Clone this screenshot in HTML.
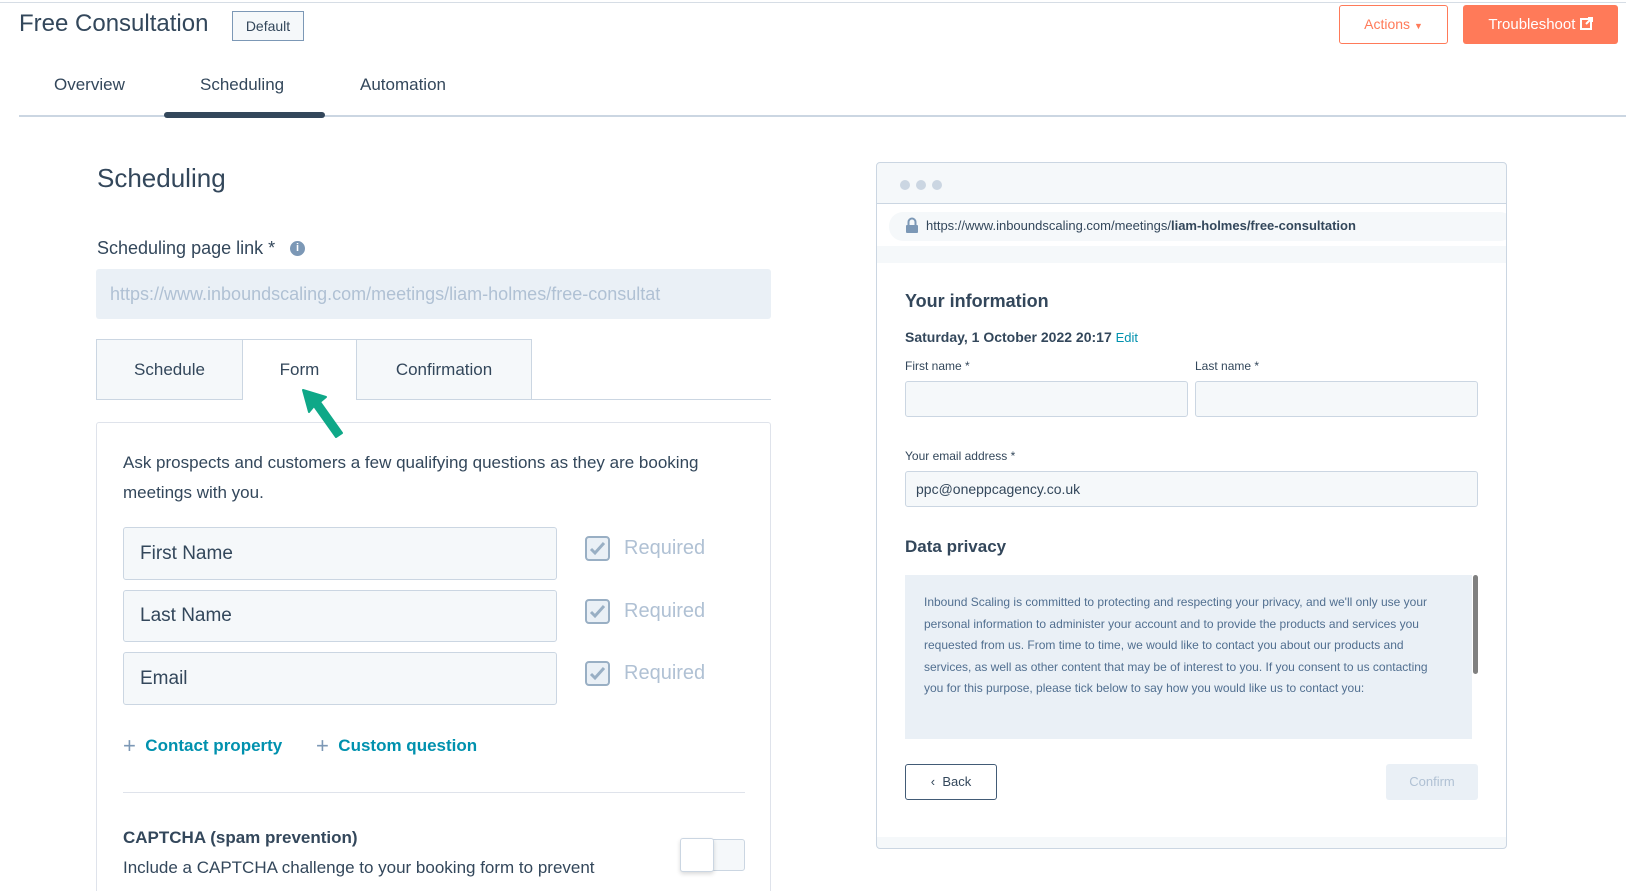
<!DOCTYPE html>
<html style="width:1626px;height:891px;overflow:hidden"><head><meta charset="utf-8"><style>
*{box-sizing:border-box;margin:0;padding:0}
body{width:1626px;height:891px;overflow:hidden;background:#fff;font-family:"Liberation Sans",sans-serif;color:#33475b;position:relative}
.a{position:absolute;white-space:nowrap}
</style></head><body>
<div class="a" style="left:0;top:2px;width:1626px;height:1px;background:#d6dde5"></div>
<div class="a" style="left:19px;top:10px;font-size:24px;color:#33475b">Free Consultation</div>
<div class="a" style="left:232px;top:11px;width:72px;height:30px;border:1px solid #7c98b6;background:#f5f8fa;font-size:14px;line-height:28px;text-align:center">Default</div>
<div class="a" style="left:1339px;top:5px;width:109px;height:39px;border:1px solid #ff7a59;border-radius:3px;color:#ff7a59;font-size:14px;line-height:37px;text-align:center">Actions <span style="font-size:9px">&#9660;</span></div>
<div class="a" style="left:1463px;top:5px;width:155px;height:39px;background:#ff7a59;border-radius:3px;color:#fff;font-size:15px;line-height:39px;text-align:center">Troubleshoot <svg width="13" height="13" viewBox="0 0 13 13" style="vertical-align:-1px"><rect x="1" y="2" width="10" height="10" fill="none" stroke="#fff" stroke-width="2"/><path d="M6 7L12 1M8 0.5h4.5V5" stroke="#fff" stroke-width="2" fill="none"/></svg></div>

<div class="a" style="left:54px;top:75px;font-size:17px">Overview</div>
<div class="a" style="left:200px;top:75px;font-size:17px">Scheduling</div>
<div class="a" style="left:360px;top:75px;font-size:17px">Automation</div>
<div class="a" style="left:19px;top:115px;width:1607px;height:2px;background:#cbd6e2"></div>
<div class="a" style="left:164px;top:112px;width:161px;height:6px;background:#33475b;border-radius:3px"></div>

<div class="a" style="left:97px;top:163px;font-size:26px">Scheduling</div>
<div class="a" style="left:97px;top:238px;font-size:18px">Scheduling page link *</div>
<div class="a" style="left:290px;top:241px;width:15px;height:15px;border-radius:50%;background:#7c98b6;color:#fff;font-size:11px;font-weight:bold;text-align:center;line-height:15px">i</div>
<div class="a" style="left:96px;top:269px;width:675px;height:50px;background:#eaf0f6;border-radius:3px;color:#b0c1d4;font-size:18px;line-height:50px;padding-left:14px;overflow:hidden">https://www.inboundscaling.com/meetings/liam-holmes/free-consultat</div>

<div class="a" style="left:96px;top:399px;width:675px;height:1px;background:#cbd6e2"></div>
<div class="a" style="left:96px;top:339px;width:147px;height:61px;background:#f5f8fa;border:1px solid #cbd6e2;font-size:17px;line-height:60px;text-align:center">Schedule</div>
<div class="a" style="left:243px;top:339px;width:113px;height:62px;background:#fff;border-top:1px solid #cbd6e2;font-size:17px;line-height:60px;text-align:center">Form</div>
<div class="a" style="left:356px;top:339px;width:176px;height:61px;background:#f5f8fa;border:1px solid #cbd6e2;font-size:17px;line-height:60px;text-align:center">Confirmation</div>

<div class="a" style="left:96px;top:422px;width:675px;height:469px;border:1px solid #dfe3eb;border-bottom:none;border-radius:3px 3px 0 0"></div>
<svg class="a" style="left:296px;top:385px" width="54" height="60" viewBox="0 0 54 60"><path d="M7 5L30 12L24 17L46 48L40 52L18 21L13 27Z" fill="#0fa888" stroke="#0fa888" stroke-width="2" stroke-linejoin="round"/></svg>

<div class="a" style="left:123px;top:448px;font-size:17px;line-height:30px;white-space:normal;width:630px;color:#33475b">Ask prospects and customers a few qualifying questions as they are booking meetings with you.</div>

<div class="a" style="left:123px;top:527px;width:434px;height:53px;background:#f5f8fa;border:1px solid #cbd6e2;border-radius:3px;font-size:19px;line-height:51px;padding-left:16px">First Name</div>
<div class="a" style="left:123px;top:590px;width:434px;height:52px;background:#f5f8fa;border:1px solid #cbd6e2;border-radius:3px;font-size:19px;line-height:50px;padding-left:16px">Last Name</div>
<div class="a" style="left:123px;top:652px;width:434px;height:53px;background:#f5f8fa;border:1px solid #cbd6e2;border-radius:3px;font-size:19px;line-height:51px;padding-left:16px">Email</div>

<div class="a" style="left:585px;top:536px"><svg width="25" height="25"><rect x="1" y="1" width="23" height="23" rx="3" fill="#eaf0f6" stroke="#99afc4" stroke-width="2"/><path d="M6 13l4 4 9-10" stroke="#99afc4" stroke-width="3" fill="none"/></svg></div>
<div class="a" style="left:624px;top:537px;font-size:20px;color:#b0c1d4">Required</div>
<div class="a" style="left:585px;top:599px"><svg width="25" height="25"><rect x="1" y="1" width="23" height="23" rx="3" fill="#eaf0f6" stroke="#99afc4" stroke-width="2"/><path d="M6 13l4 4 9-10" stroke="#99afc4" stroke-width="3" fill="none"/></svg></div>
<div class="a" style="left:624px;top:600px;font-size:20px;color:#b0c1d4">Required</div>
<div class="a" style="left:585px;top:661px"><svg width="25" height="25"><rect x="1" y="1" width="23" height="23" rx="3" fill="#eaf0f6" stroke="#99afc4" stroke-width="2"/><path d="M6 13l4 4 9-10" stroke="#99afc4" stroke-width="3" fill="none"/></svg></div>
<div class="a" style="left:624px;top:662px;font-size:20px;color:#b0c1d4">Required</div>

<div class="a" style="left:123px;top:733px;font-size:17px;font-weight:bold;color:#0091ae"><span style="color:#7c98b6;font-weight:normal;font-size:22px;vertical-align:-2px">+</span>&nbsp; Contact property</div>
<div class="a" style="left:316px;top:733px;font-size:17px;font-weight:bold;color:#0091ae"><span style="color:#7c98b6;font-weight:normal;font-size:22px;vertical-align:-2px">+</span>&nbsp; Custom question</div>
<div class="a" style="left:123px;top:792px;width:622px;height:1px;background:#dfe3eb"></div>
<div class="a" style="left:123px;top:828px;font-size:17px;font-weight:bold">CAPTCHA (spam prevention)</div>
<div class="a" style="left:123px;top:858px;font-size:17px">Include a CAPTCHA challenge to your booking form to prevent</div>
<div class="a" style="left:680px;top:839px;width:65px;height:32px;background:#f5f8fa;border:1px solid #cbd6e2;border-radius:3px"></div>
<div class="a" style="left:680px;top:838px;width:34px;height:34px;background:#fff;border:1px solid #cbd6e2;border-radius:3px;box-shadow:0 2px 4px rgba(0,0,0,.15)"></div>

<!-- preview -->
<div class="a" style="left:876px;top:162px;width:631px;height:687px;border:1px solid #cbd6e2;border-radius:4px;background:#f5f8fa;overflow:hidden">
 <div class="a" style="left:0;top:40px;width:631px;height:1px;background:#cbd6e2"></div>
 <div class="a" style="left:23px;top:17px;width:10px;height:10px;border-radius:50%;background:#cbd6e2"></div>
 <div class="a" style="left:39px;top:17px;width:10px;height:10px;border-radius:50%;background:#cbd6e2"></div>
 <div class="a" style="left:55px;top:17px;width:10px;height:10px;border-radius:50%;background:#cbd6e2"></div>
 <div class="a" style="left:0;top:41px;width:631px;height:42px;background:#fff"></div>
 <div class="a" style="left:12px;top:49px;width:625px;height:29px;background:#f5f8fa;border-radius:14px"></div>
 <svg class="a" style="left:28px;top:54px" width="14" height="17"><path d="M3.5 8V5a3.5 3.5 0 0 1 7 0v3" stroke="#7c98b6" stroke-width="2" fill="none"/><rect x="1" y="8" width="12" height="8" rx="1" fill="#7c98b6"/></svg>
 <div class="a" style="left:49px;top:55px;font-size:13px;color:#33475b">https://www.inboundscaling.com/meetings/<b>liam-holmes/free-consultation</b></div>
 <div class="a" style="left:0;top:100px;width:631px;height:574px;background:#fff"></div>
 <div class="a" style="left:28px;top:128px;font-size:18px;font-weight:bold">Your information</div>
 <div class="a" style="left:28px;top:166px;font-size:14px;font-weight:bold">Saturday, 1 October 2022 20:17 <span style="color:#0091ae;font-weight:normal;font-size:13px">Edit</span></div>
 <div class="a" style="left:28px;top:196px;font-size:12px">First name *</div>
 <div class="a" style="left:318px;top:196px;font-size:12px">Last name *</div>
 <div class="a" style="left:28px;top:218px;width:283px;height:36px;background:#f5f8fa;border:1px solid #cbd6e2;border-radius:3px"></div>
 <div class="a" style="left:318px;top:218px;width:283px;height:36px;background:#f5f8fa;border:1px solid #cbd6e2;border-radius:3px"></div>
 <div class="a" style="left:28px;top:286px;font-size:12px">Your email address *</div>
 <div class="a" style="left:28px;top:308px;width:573px;height:36px;background:#f5f8fa;border:1px solid #cbd6e2;border-radius:3px;font-size:14px;line-height:34px;padding-left:10px">ppc@oneppcagency.co.uk</div>
 <div class="a" style="left:28px;top:374px;font-size:17px;font-weight:bold">Data privacy</div>
 <div class="a" style="left:28px;top:412px;width:567px;height:164px;background:#eaf0f6;padding:17px 30px 17px 19px;font-size:12px;line-height:21.6px;color:#516f90;white-space:normal">Inbound Scaling is committed to protecting and respecting your privacy, and we'll only use your personal information to administer your account and to provide the products and services you requested from us. From time to time, we would like to contact you about our products and services, as well as other content that may be of interest to you. If you consent to us contacting you for this purpose, please tick below to say how you would like us to contact you:</div>
 <div class="a" style="left:596px;top:412px;width:5px;height:99px;background:#808080;border-radius:3px"></div>
 <div class="a" style="left:28px;top:601px;width:92px;height:36px;border:1px solid #425b76;border-radius:3px;font-size:13px;line-height:34px;text-align:center">&#8249;&nbsp; Back</div>
 <div class="a" style="left:509px;top:601px;width:92px;height:36px;background:#eaf0f6;border-radius:3px;font-size:13px;line-height:36px;text-align:center;color:#b0c1d4">Confirm</div>
</div>
</body></html>
